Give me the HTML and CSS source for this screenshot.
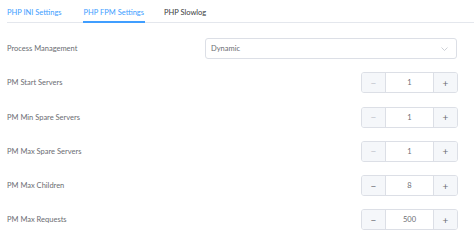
FILE: index.html
```html
<!DOCTYPE html>
<html lang="en">
<head>
    <meta charset="UTF-8">
    <title>PHP FPM Settings</title>
    <link rel="stylesheet" href="styles.css">
</head>
<body>
    <div class="tabs">
        <div class="tab hover">PHP INI Settings</div>
        <div class="tab active">PHP FPM Settings</div>
        <div class="tab">PHP Slowlog</div>
    </div>

    <div class="form">
        <div class="row">
            <label>Process Management</label>
            <div class="select">
                <span>Dynamic</span>
                <svg width="7" height="4" viewBox="0 0 7 4"><path d="M0.5 0.5l3 3 3-3" fill="none" stroke="#c0c4cc" stroke-width="0.8"/></svg>
            </div>
        </div>
        <div class="row">
            <label>PM Start Servers</label>
            <div class="number">
                <span class="btn disabled">&minus;</span>
                <span class="value">1</span>
                <span class="btn">+</span>
            </div>
        </div>
        <div class="row">
            <label>PM Min Spare Servers</label>
            <div class="number">
                <span class="btn disabled">&minus;</span>
                <span class="value">1</span>
                <span class="btn">+</span>
            </div>
        </div>
        <div class="row">
            <label>PM Max Spare Servers</label>
            <div class="number">
                <span class="btn disabled">&minus;</span>
                <span class="value">1</span>
                <span class="btn">+</span>
            </div>
        </div>
        <div class="row">
            <label>PM Max Children</label>
            <div class="number">
                <span class="btn">&minus;</span>
                <span class="value">8</span>
                <span class="btn">+</span>
            </div>
        </div>
        <div class="row">
            <label>PM Max Requests</label>
            <div class="number">
                <span class="btn">&minus;</span>
                <span class="value">500</span>
                <span class="btn">+</span>
            </div>
        </div>
    </div>
</body>
</html>
```

FILE: styles.css
```css
body {
    margin: 0;
    padding: 0 0 0 7px;
    font-family: Lato, "Noto Sans", sans-serif;
    font-size: 7.5px;
    color: #6b6d72;
    background: #fff;
}

.tabs {
    display: flex;
    gap: 19px;
    height: 22px;
    border-bottom: 1px solid #e4e7ed;
}

.tab {
    padding-top: 8px;
    color: #3a3c40;
    box-sizing: border-box;
}

.tab.hover {
    color: #409eff;
    margin-right: 2px;
}

.tab.active {
    color: #409eff;
    border-bottom: 2px solid #409eff;
    margin-bottom: -1px;
    padding-left: 1px;
    padding-right: 1px;
}

.form {
    padding: 15px 17px 0 0;
    display: flex;
    flex-direction: column;
    gap: 13.3px;
}

.row {
    display: flex;
    align-items: center;
    justify-content: space-between;
    height: 21px;
}

.select {
    width: 252px;
    height: 21px;
    box-sizing: border-box;
    border: 1px solid #dcdfe6;
    border-radius: 3px;
    display: flex;
    align-items: center;
    justify-content: space-between;
    padding: 0 8px 0 5px;
}

.number {
    display: flex;
    width: 97px;
    height: 21px;
    box-sizing: border-box;
    border: 1px solid #dcdfe6;
    border-radius: 3px;
    overflow: hidden;
    margin-right: -1px;
}

.btn {
    width: 23px;
    background: #f5f7fa;
    display: flex;
    align-items: center;
    justify-content: center;
    font-size: 10px;
}

.btn.disabled {
    color: #c0c4cc;
}

.value {
    flex: 1;
    display: flex;
    align-items: center;
    justify-content: center;
    border-left: 1px solid #dcdfe6;
    border-right: 1px solid #dcdfe6;
}
```
